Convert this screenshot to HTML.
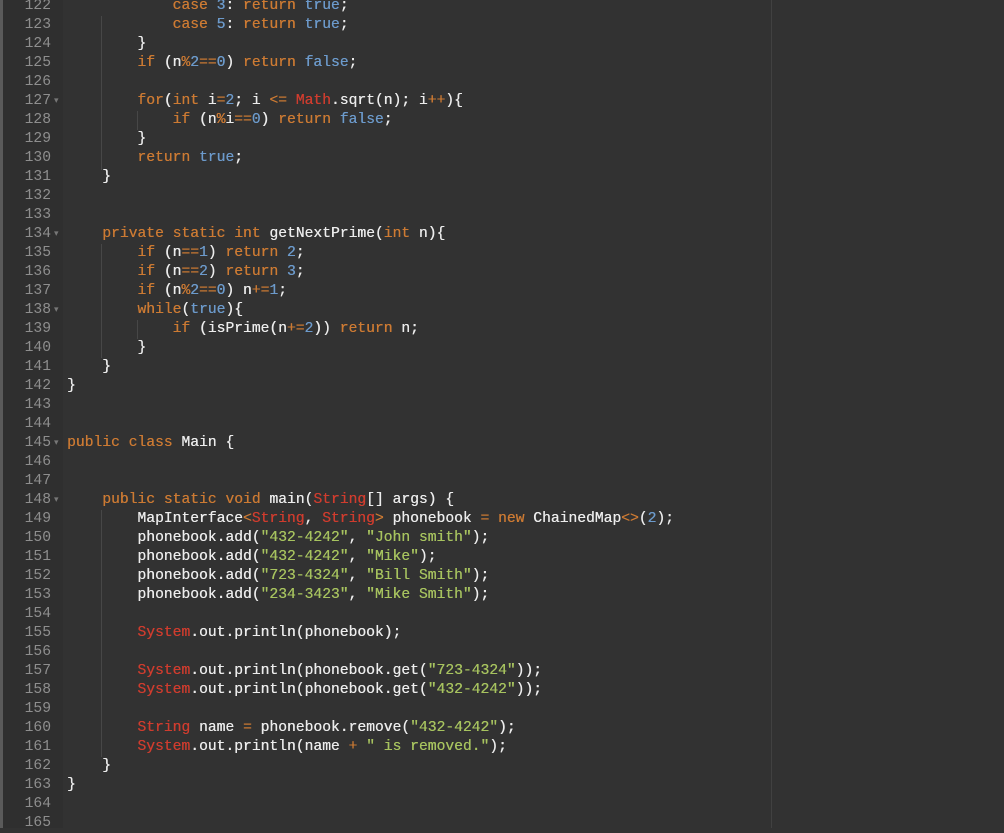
<!DOCTYPE html>
<html><head><meta charset="utf-8"><style>
html,body{margin:0;padding:0;width:1004px;height:828px;overflow:hidden;background:#323232;}
#g{position:absolute;left:0;top:0;width:63px;height:828px;background:#2f2f2f;}
#s{position:absolute;left:0;top:0;width:3px;height:828px;background:#5a5a5a;}
#m{position:absolute;left:771px;top:0;width:1px;height:828px;background:#414141;}
.ln{position:absolute;left:0;width:51px;text-align:right;color:#8e8e8e;}
.f{position:absolute;left:54px;color:#777;font-size:9px;}
.c{position:absolute;left:67px;white-space:pre;color:#ececec;text-shadow:0.3px 0 0 currentColor;}
.ln,.c{font-family:"Liberation Mono",monospace;font-size:14.67px;line-height:19px;height:19px;}
.k{color:#cc7a33}.n{color:#6c9acb}.s{color:#a7c35f}.r{color:#cf3c2e}.o{color:#cc7a33}
.gd{position:absolute;width:1px;background:#474747;}
</style></head><body>
<div id="g"></div><div id="s"></div><div id="m"></div>
<div class="gd" style="left:101px;top:16px;height:154px"></div>
<div class="gd" style="left:137px;top:111px;height:19px"></div>
<div class="gd" style="left:101px;top:244px;height:114px"></div>
<div class="gd" style="left:137px;top:320px;height:19px"></div>
<div class="gd" style="left:101px;top:510px;height:247px"></div>
<div id="code"></div>
<script>
const L=[
`        <span class="k">case</span> <span class="n">3</span>: <span class="k">return</span> <span class="n">true</span>;`,
`        <span class="k">case</span> <span class="n">5</span>: <span class="k">return</span> <span class="n">true</span>;`,
`    }`,
`    <span class="k">if</span> (n<span class="o">%</span><span class="n">2</span><span class="o">==</span><span class="n">0</span>) <span class="k">return</span> <span class="n">false</span>;`,
``,
`    <span class="k">for</span>(<span class="k">int</span> i<span class="o">=</span><span class="n">2</span>; i <span class="o">&lt;=</span> <span class="r">Math</span>.sqrt(n); i<span class="o">++</span>){`,
`        <span class="k">if</span> (n<span class="o">%</span>i<span class="o">==</span><span class="n">0</span>) <span class="k">return</span> <span class="n">false</span>;`,
`    }`,
`    <span class="k">return</span> <span class="n">true</span>;`,
`}`,
``,
``,
`<span class="k">private</span> <span class="k">static</span> <span class="k">int</span> getNextPrime(<span class="k">int</span> n){`,
`    <span class="k">if</span> (n<span class="o">==</span><span class="n">1</span>) <span class="k">return</span> <span class="n">2</span>;`,
`    <span class="k">if</span> (n<span class="o">==</span><span class="n">2</span>) <span class="k">return</span> <span class="n">3</span>;`,
`    <span class="k">if</span> (n<span class="o">%</span><span class="n">2</span><span class="o">==</span><span class="n">0</span>) n<span class="o">+=</span><span class="n">1</span>;`,
`    <span class="k">while</span>(<span class="n">true</span>){`,
`        <span class="k">if</span> (isPrime(n<span class="o">+=</span><span class="n">2</span>)) <span class="k">return</span> n;`,
`    }`,
`}`,
`@}`,
``,
``,
`@<span class="k">public</span> <span class="k">class</span> Main {`,
``,
``,
`<span class="k">public</span> <span class="k">static</span> <span class="k">void</span> main(<span class="r">String</span>[] args) {`,
`    MapInterface<span class="o">&lt;</span><span class="r">String</span>, <span class="r">String</span><span class="o">&gt;</span> phonebook <span class="o">=</span> <span class="k">new</span> ChainedMap<span class="o">&lt;&gt;</span>(<span class="n">2</span>);`,
`    phonebook.add(<span class="s">"432-4242"</span>, <span class="s">"John smith"</span>);`,
`    phonebook.add(<span class="s">"432-4242"</span>, <span class="s">"Mike"</span>);`,
`    phonebook.add(<span class="s">"723-4324"</span>, <span class="s">"Bill Smith"</span>);`,
`    phonebook.add(<span class="s">"234-3423"</span>, <span class="s">"Mike Smith"</span>);`,
``,
`    <span class="r">System</span>.out.println(phonebook);`,
``,
`    <span class="r">System</span>.out.println(phonebook.get(<span class="s">"723-4324"</span>));`,
`    <span class="r">System</span>.out.println(phonebook.get(<span class="s">"432-4242"</span>));`,
``,
`    <span class="r">String</span> name <span class="o">=</span> phonebook.remove(<span class="s">"432-4242"</span>);`,
`    <span class="r">System</span>.out.println(name <span class="o">+</span> <span class="s">" is removed."</span>);`,
`}`,
`@}`,
``,
``];
const folds=[127,134,138,145,148];
let h='';
L.forEach((t,i)=>{const n=122+i,y=-3+i*19;
 let code=t.startsWith('@')?t.slice(1):(t?'    '+t:'');
 h+=`<div class="ln" style="top:${y}px">${n}</div>`;
 if(folds.includes(n))h+=`<div class="f" style="top:${y+3}px">&#9662;</div>`;
 h+=`<div class="c" style="top:${y}px">${code}</div>`;});
document.getElementById('code').innerHTML=h;
</script>
</body></html>
